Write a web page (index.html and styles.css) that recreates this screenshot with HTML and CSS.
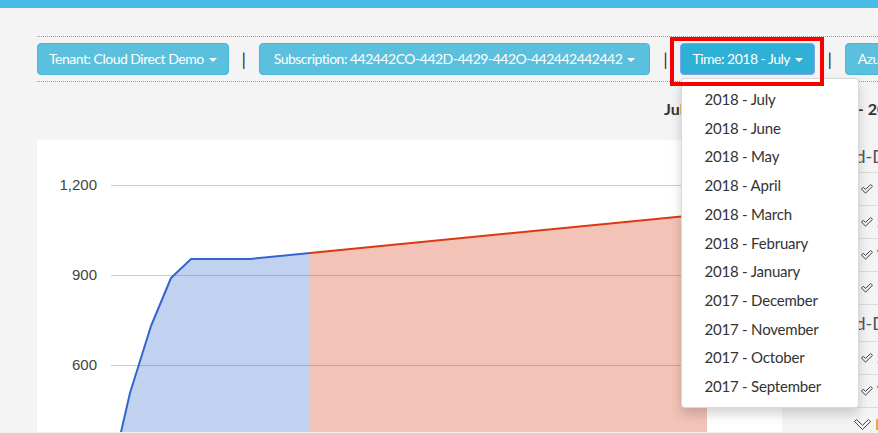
FILE: index.html
```html
<!DOCTYPE html>
<html lang="en">
<head>
<meta charset="utf-8">
<title>Usage</title>
<link rel="stylesheet" href="styles.css">
</head>
<body>
<div class="topbar"></div>
<div class="filters">
  <div class="dd"><button class="btn btn-narrow">Tenant: Cloud Direct Demo <span class="caret"></span></button></div>
  <span class="sep">|</span>
  <div class="dd"><button class="btn btn-wide">Subscription: 442442CO-442D-4429-442O-442442442442 <span class="caret"></span></button></div>
  <span class="sep">|</span>
  <div class="dd open">
    <button class="btn btn-narrow active">Time: 2018 - July <span class="caret"></span></button>
    <ul class="menu">
      <li>2018 - July</li>
      <li>2018 - June</li>
      <li>2018 - May</li>
      <li>2018 - April</li>
      <li>2018 - March</li>
      <li>2018 - February</li>
      <li>2018 - January</li>
      <li>2017 - December</li>
      <li>2017 - November</li>
      <li>2017 - October</li>
      <li>2017 - September</li>
    </ul>
  </div>
  <span class="sep">|</span>
  <div class="dd"><button class="btn">Azure Services <span class="caret"></span></button></div>
</div>
<div class="content">
  <div class="chart-col">
    <h4 class="chart-title">July 2018 Forecast</h4>
    <div class="card">
      <svg class="chart" width="745" height="292" viewBox="0 0 745 292">
        <g class="grid">
          <line x1="74" y1="45.5" x2="670" y2="45.5"/>
          <line x1="74" y1="135.5" x2="670" y2="135.5"/>
          <line x1="74" y1="225.5" x2="670" y2="225.5"/>
        </g>
        <g class="labels">
          <text x="60" y="50">1,200</text>
          <text x="60" y="140">900</text>
          <text x="60" y="230">600</text>
        </g>
        <polygon class="area-blue" points="84,292 93,253 114,186 134,138 154,119 213,119 273,113 273,310 80,310"/>
        <polygon class="area-red" points="273,113 670,74 670,310 273,310"/>
        <polyline class="line-blue" points="80,310 84,292 93,253 114,186 134,138 154,119 213,119 273,113"/>
        <polyline class="line-red" points="273,113 670,74"/>
      </svg>
    </div>
  </div>
  <div class="panel">
    <h4 class="panel-title">Services - 2018</h4>
    <div class="group">Cloud-Direct</div>
    <div class="row"><svg class="ico" width="12" height="10" viewBox="0 0 12 10"><polygon points="0.5,5 2.3,3.2 4.5,5.4 9.7,0.5 11.5,2.3 4.5,9.2"/></svg><span class="warn">Infrastructure</span></div>
    <div class="row"><svg class="ico" width="12" height="10" viewBox="0 0 12 10"><polygon points="0.5,5 2.3,3.2 4.5,5.4 9.7,0.5 11.5,2.3 4.5,9.2"/></svg><span>Storage</span></div>
    <div class="row"><svg class="ico" width="12" height="10" viewBox="0 0 12 10"><polygon points="0.5,5 2.3,3.2 4.5,5.4 9.7,0.5 11.5,2.3 4.5,9.2"/></svg><span>Virtual Machines</span></div>
    <div class="row"><svg class="ico" width="12" height="10" viewBox="0 0 12 10"><polygon points="0.5,5 2.3,3.2 4.5,5.4 9.7,0.5 11.5,2.3 4.5,9.2"/></svg><span class="warn">Insights</span></div>
    <div class="group second">Cloud-Demo</div>
    <div class="row"><svg class="ico" width="12" height="10" viewBox="0 0 12 10"><polygon points="0.5,5 2.3,3.2 4.5,5.4 9.7,0.5 11.5,2.3 4.5,9.2"/></svg><span>Storage</span></div>
    <div class="row"><svg class="ico" width="12" height="10" viewBox="0 0 12 10"><polygon points="0.5,5 2.3,3.2 4.5,5.4 9.7,0.5 11.5,2.3 4.5,9.2"/></svg><span>Virtual Machines</span></div>
    <div class="row more"><svg class="ico chev" width="17" height="11" viewBox="0 0 17 11"><polygon points="0.5,2.6 2.6,0.5 8.5,6.3 14.4,0.5 16.5,2.6 8.5,10.5"/></svg><span class="warn">Insights</span></div>
  </div>
</div>
</body>
</html>
```

FILE: styles.css
```css
html, body {
  margin: 0;
  padding: 0;
}
body {
  width: 878px;
  height: 433px;
  overflow: hidden;
  background: #f4f4f4;
  font-family: Lato, "Open Sans", sans-serif;
  color: #333;
}
.topbar {
  height: 8px;
  background: #4abbe7;
}
.filters {
  margin: 28px 0 0 37px;
  padding: 6px 0;
  border-top: 1px dotted #999;
  border-bottom: 1px dotted #999;
  display: flex;
  align-items: center;
  white-space: nowrap;
  position: relative;
  z-index: 5;
}
.dd {
  position: relative;
  flex: none;
}
.btn {
  display: block;
  font-family: inherit;
  font-size: 14px;
  letter-spacing: -0.5px;
  line-height: 18px;
  height: 32px;
  padding: 6px 12px;
  color: #fff;
  background: #5bc0de;
  border: 1px solid #46b8da;
  border-radius: 4px;
  white-space: nowrap;
}
.btn-narrow {
  padding: 6px 11px;
}
.btn-wide {
  padding: 6px 14px;
}
.btn.active {
  background: #2fb0d6;
  border-color: #7aa6ea;
}
.caret {
  display: inline-block;
  width: 0;
  height: 0;
  margin-left: 2px;
  vertical-align: middle;
  border-top: 4px solid #fff;
  border-left: 4px solid transparent;
  border-right: 4px solid transparent;
}
.sep {
  flex: none;
  width: 30px;
  text-align: center;
  font-size: 18px;
  line-height: 20px;
  color: #333;
}
.open::after {
  content: "";
  position: absolute;
  left: -10px;
  right: -9px;
  top: -6px;
  bottom: -11px;
  border: 4px solid #f70000;
  z-index: 3;
  pointer-events: none;
}
.menu {
  position: absolute;
  top: 100%;
  left: 1px;
  margin: 3px 0 0;
  width: 178px;
  box-sizing: border-box;
  padding: 6px 0;
  list-style: none;
  background: #fff;
  border: 1px solid rgba(0, 0, 0, 0.15);
  border-radius: 4px;
  box-shadow: 0 6px 12px rgba(0, 0, 0, 0.175);
  z-index: 2;
}
.menu li {
  padding: 3px 22px;
  font-size: 15px;
  line-height: 22.7px;
  letter-spacing: -0.2px;
  color: #333;
  white-space: nowrap;
}
.content {
  display: flex;
  margin-left: 37px;
}
.chart-col {
  flex: none;
  width: 745px;
}
.chart-title, .panel-title {
  margin: 0;
  height: 58px;
  box-sizing: border-box;
  padding-top: 17px;
  font-size: 16px;
  line-height: 20px;
  font-weight: 700;
  color: #333;
  white-space: nowrap;
}
.chart-title {
  padding-left: 627px;
  overflow: hidden;
}
.card {
  background: #fff;
  height: 292px;
}
.chart {
  display: block;
}
.grid line {
  stroke: #cccccc;
  stroke-width: 1;
}
.labels text {
  font-family: "Liberation Sans", Arial, sans-serif;
  font-size: 15px;
  fill: #444;
  text-anchor: end;
}
.area-blue {
  fill: #3366cc;
  fill-opacity: 0.3;
}
.area-red {
  fill: #dc3912;
  fill-opacity: 0.3;
}
.line-blue, .line-red {
  fill: none;
  stroke-width: 2;
  stroke-linejoin: round;
}
.line-blue { stroke: #3366cc; }
.line-red { stroke: #dc3912; }
.panel {
  flex: 1;
  min-width: 0;
  overflow: hidden;
  white-space: nowrap;
}
.panel-title {
  padding-left: 13px;
}
.group {
  height: 32px;
  line-height: 32px;
  padding-left: 37px;
  font-size: 18px;
  color: #555;
}
.group.second {
  height: 36px;
  line-height: 36px;
  border-top: 1px solid #dcdcdc;
}
.row {
  height: 32px;
  border-top: 1px solid #dcdcdc;
  display: flex;
  align-items: center;
  padding-left: 79px;
  font-size: 15px;
  color: #333;
}
.row.more {
  padding-left: 72px;
}
.ico {
  flex: none;
  margin-right: 4px;
}
.ico polygon {
  fill: none;
  stroke: #444;
  stroke-width: 1;
  stroke-linejoin: round;
}
.warn {
  color: #e08a2c;
}
```
